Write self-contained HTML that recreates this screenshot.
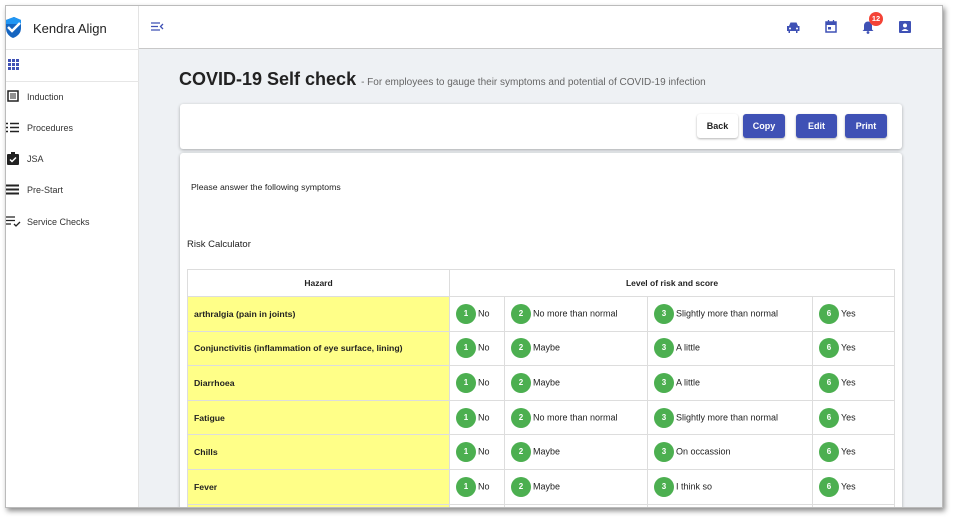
<!DOCTYPE html>
<html><head><style>
*{margin:0;padding:0;box-sizing:border-box}
body{width:956px;height:520px;background:#fff;font-family:"Liberation Sans",sans-serif;position:relative;overflow:hidden;color:#222}
.win{position:absolute;left:5px;top:5px;width:938px;height:503px;border:1px solid #bbb;box-shadow:2px 3px 5px rgba(0,0,0,.45);overflow:hidden;background:#eef1f4}
.side{position:absolute;left:0;top:0;width:133px;height:503px;background:#fff;border-right:1px solid #e3e3e3}
.hdr{position:absolute;left:133px;top:0;right:0;height:43px;background:#fff;border-bottom:1px solid #c8c8c8}
.a{position:absolute}
.nav{position:absolute;left:21px;font-size:9px;color:#333}
.card{position:absolute;background:#fff;border-radius:3px;box-shadow:0 1px 3px rgba(0,0,0,.3)}
.btn{position:absolute;top:10px;height:24px;border-radius:3px;font-size:9px;font-weight:bold;color:#fff;background:#3f51b5;text-align:center;line-height:24px;box-shadow:0 1px 2px rgba(0,0,0,.3)}
table{position:absolute;left:181px;top:263px;border-collapse:collapse;font-size:9px}
td,th{border:1px solid #ddd;height:34.6px;padding:0 6px;white-space:nowrap}
th{height:27px;font-weight:bold;text-align:center;font-size:8.5px}
td.h{background:#ffff88;font-weight:bold;font-size:8.7px}
.c{display:inline-block;width:20px;height:20px;border-radius:50%;background:#4caf50;color:#fff;text-align:center;line-height:20px;font-size:8px;font-weight:bold;vertical-align:middle;margin-right:2px}
</style></head><body>
<div class="win">
<div class="side">
<svg class="a" style="left:0;top:11px" width="16" height="22" viewBox="0 0 16 22"><path d="M0 3 L8 0 L15 3 L15 11 Q15 18 7 21 Q0 18 0 11Z" fill="#1565c0"/><path d="M0 3 L8 0 L15 3 L15 7 L0 7Z" fill="#2196f3"/><path d="M2 10 L6 14 L14 6" stroke="#fff" stroke-width="2.5" fill="none"/></svg>
<div class="a" style="left:27px;top:15px;font-size:13px;color:#222">Kendra Align</div>
<div class="a" style="left:0;top:43px;width:133px;border-top:1px solid #e6e6e6"></div>
<svg class="a" style="left:2px;top:53px" width="11" height="11"><g fill="#3f51b5"><rect x="0" y="0" width="3" height="3"/><rect x="4" y="0" width="3" height="3"/><rect x="8" y="0" width="3" height="3"/><rect x="0" y="4" width="3" height="3"/><rect x="4" y="4" width="3" height="3"/><rect x="8" y="4" width="3" height="3"/><rect x="0" y="8" width="3" height="3"/><rect x="4" y="8" width="3" height="3"/><rect x="8" y="8" width="3" height="3"/></g></svg>
<div class="a" style="left:0;top:75px;width:133px;border-top:1px solid #e6e6e6"></div>
<svg class="a" style="left:1px;top:84px" width="12" height="12"><rect x="1" y="1" width="10" height="10" fill="none" stroke="#222" stroke-width="1.5"/><path d="M3 4h6M3 6h6M3 8h6" stroke="#222"/></svg><div class="nav" style="top:86px">Induction</div>
<svg class="a" style="left:0;top:116px" width="13" height="11"><path d="M0 1.5h2M4 1.5h9M0 5.5h2M4 5.5h9M0 9.5h2M4 9.5h9" stroke="#222" stroke-width="1.6"/></svg><div class="nav" style="top:117px">Procedures</div>
<svg class="a" style="left:1px;top:146px" width="12" height="13"><rect x="0" y="2" width="12" height="11" rx="1" fill="#222"/><rect x="4" y="0" width="4" height="3" fill="#222"/><path d="M3 7.5l2 2 4-4" stroke="#fff" stroke-width="1.5" fill="none"/></svg><div class="nav" style="top:148px">JSA</div>
<svg class="a" style="left:0;top:178px" width="13" height="11"><path d="M0 1.5h13M0 5.5h13M0 9.5h13" stroke="#222" stroke-width="2"/></svg><div class="nav" style="top:179px">Pre-Start</div>
<svg class="a" style="left:0;top:210px" width="15" height="11"><path d="M0 1h9M0 4.5h9M0 8h5M8 8l2 2 4-4" stroke="#222" stroke-width="1.3" fill="none"/></svg><div class="nav" style="top:211px">Service Checks</div>
</div>
<div class="hdr">
<svg class="a" style="left:12px;top:16px" width="13" height="9"><path d="M0 1h9M0 4.5h7M0 8h9M12 2l-2.5 2.5L12 7" stroke="#3f51b5" stroke-width="1.3" fill="none"/></svg>
<svg class="a" style="left:648px;top:16px" width="13" height="11"><path d="M2 4l1.5-3.5h6L11 4h1.5v5h-2v2h-1.5v-2h-6v2H1.5v-2h-1.5v-5z" fill="#3f51b5"/><circle cx="3" cy="6.5" r="1" fill="#fff"/><circle cx="10" cy="6.5" r="1" fill="#fff"/></svg>
<svg class="a" style="left:686px;top:14px" width="12" height="13"><rect x="1" y="2" width="10" height="10" fill="none" stroke="#3f51b5" stroke-width="1.5"/><rect x="1" y="2" width="10" height="3" fill="#3f51b5"/><path d="M3.5 0v3M8.5 0v3" stroke="#3f51b5" stroke-width="1.3"/><rect x="3" y="7" width="3" height="2.5" fill="#3f51b5"/></svg>
<svg class="a" style="left:723px;top:14px" width="12" height="14"><path d="M6 1.5a4 4 0 0 1 4 4v4l1.5 1.5h-11L2 9.5v-4a4 4 0 0 1 4-4z" fill="#3f51b5"/><circle cx="6" cy="12.5" r="1.4" fill="#3f51b5"/></svg>
<div class="a" style="left:730px;top:6px;width:14px;height:14px;border-radius:50%;background:#f44336;color:#fff;font-size:7.5px;font-weight:bold;text-align:center;line-height:14px">12</div>
<svg class="a" style="left:760px;top:15px" width="12" height="12"><rect width="12" height="12" rx="1" fill="#3f51b5"/><circle cx="6" cy="4.5" r="2" fill="#fff"/><path d="M2.5 10q3.5-4 7 0z" fill="#fff"/></svg>
</div>
<div class="a" style="left:173px;top:63px;font-size:18px;font-weight:bold;color:#222">COVID-19 Self check <span style="font-size:10px;font-weight:normal;color:#666">- For employees to gauge their symptoms and potential of COVID-19 infection</span></div>
<div class="card" style="left:174px;top:98px;width:722px;height:45px">
<div class="btn" style="left:517px;width:41px;background:#fff;color:#222">Back</div>
<div class="btn" style="left:563px;width:42px">Copy</div>
<div class="btn" style="left:616px;width:41px">Edit</div>
<div class="btn" style="left:665px;width:42px">Print</div>
</div>
<div class="card" style="left:174px;top:147px;width:722px;height:370px"></div>
<div class="a" style="left:185px;top:176px;font-size:8.7px">Please answer the following symptoms</div>
<div class="a" style="left:181px;top:233px;font-size:9.5px">Risk Calculator</div>
<table>
<tr><th style="width:262px">Hazard</th><th colspan="4">Level of risk and score</th></tr>
<tr><td class="h">arthralgia (pain in joints)</td><td style="width:55px"><span class="c">1</span>No</td><td style="width:143px"><span class="c">2</span>No more than normal</td><td style="width:165px"><span class="c">3</span>Slightly more than normal</td><td style="width:82px"><span class="c">6</span>Yes</td></tr>
<tr><td class="h">Conjunctivitis (inflammation of eye surface, lining)</td><td><span class="c">1</span>No</td><td><span class="c">2</span>Maybe</td><td><span class="c">3</span>A little</td><td><span class="c">6</span>Yes</td></tr>
<tr><td class="h">Diarrhoea</td><td><span class="c">1</span>No</td><td><span class="c">2</span>Maybe</td><td><span class="c">3</span>A little</td><td><span class="c">6</span>Yes</td></tr>
<tr><td class="h">Fatigue</td><td><span class="c">1</span>No</td><td><span class="c">2</span>No more than normal</td><td><span class="c">3</span>Slightly more than normal</td><td><span class="c">6</span>Yes</td></tr>
<tr><td class="h">Chills</td><td><span class="c">1</span>No</td><td><span class="c">2</span>Maybe</td><td><span class="c">3</span>On occassion</td><td><span class="c">6</span>Yes</td></tr>
<tr><td class="h">Fever</td><td><span class="c">1</span>No</td><td><span class="c">2</span>Maybe</td><td><span class="c">3</span>I think so</td><td><span class="c">6</span>Yes</td></tr>
<tr><td class="h"></td><td></td><td></td><td></td><td></td></tr>
</table>
</div>
</body></html>
